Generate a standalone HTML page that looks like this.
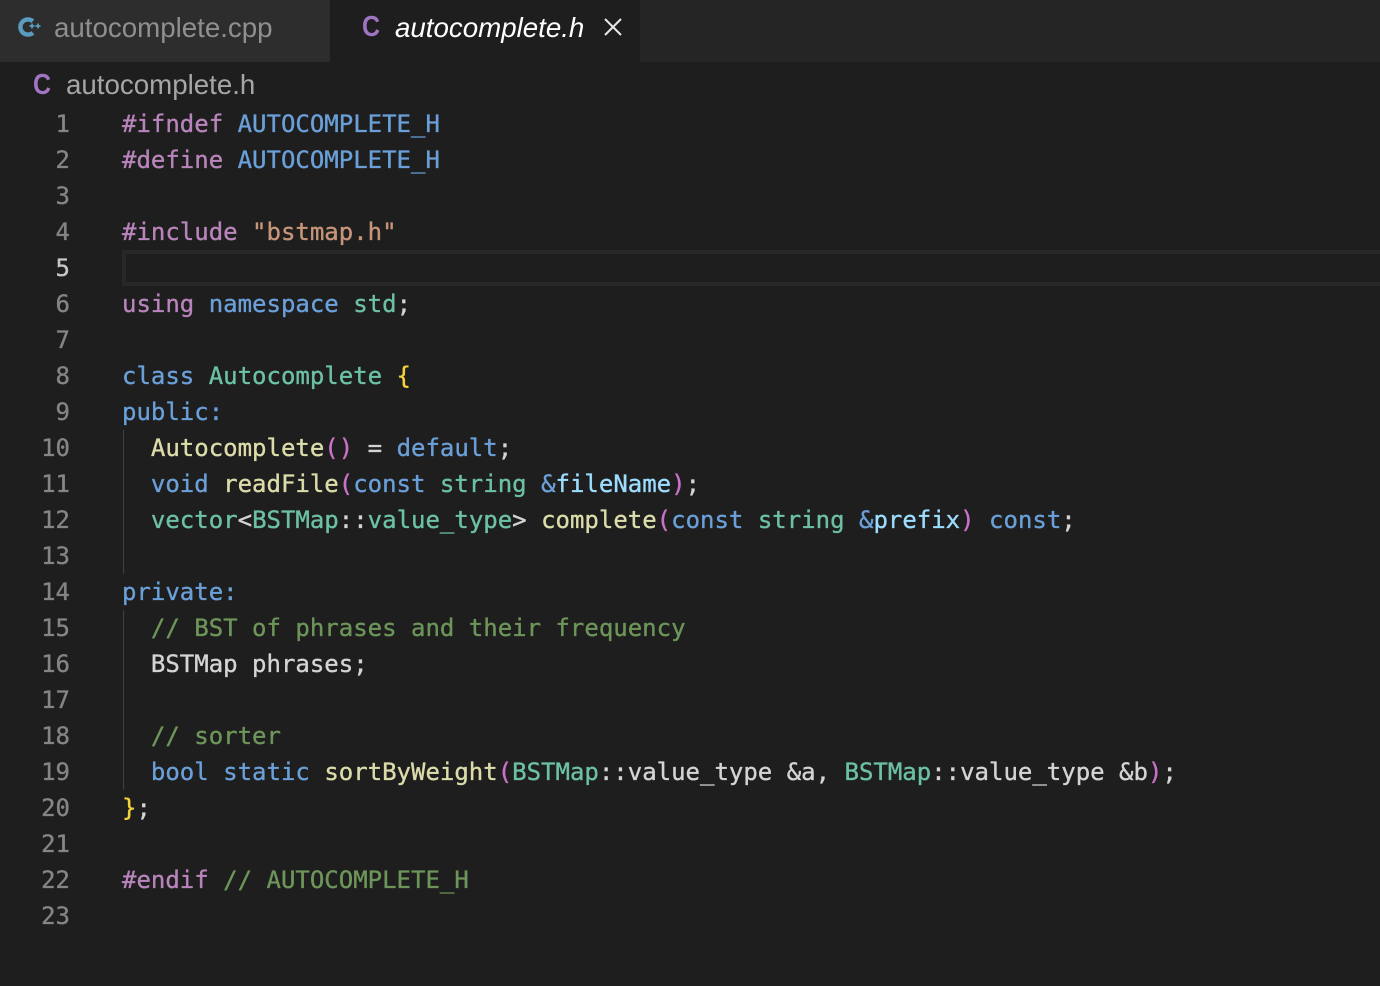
<!DOCTYPE html>
<html><head><meta charset="utf-8"><style>
html,body{margin:0;padding:0;width:1380px;height:986px;overflow:hidden;background:#1e1e1e}
.a{position:absolute}
.tabbar{left:0;top:0;width:1380px;height:62px;background:#252526}
.t1{left:0;top:0;width:330px;height:62px;background:#2d2d2d}
.t2{left:330px;top:0;width:310px;height:62px;background:#1e1e1e}
.ui{font-family:"Liberation Sans",sans-serif;font-size:27.7px;line-height:36px;white-space:pre}
.ic{font-family:"Liberation Sans",sans-serif;font-weight:700;font-size:29px;line-height:36px;color:#a074c4;transform:scaleX(.86);transform-origin:left center}
.ln,.c{font-family:"DejaVu Sans Mono",monospace;font-size:24px;line-height:36px;white-space:pre;height:36px;-webkit-text-stroke:.35px currentColor}
.ln{left:0;width:70px;text-align:right;color:#858585}
.c{left:122px;color:#d4d4d4}
.k{color:#b884bb}.b{color:#6a9fd8}.s{color:#c69479}.g{color:#6cc0a6}.f{color:#dcdcaa}.v{color:#9cdcfe}.m{color:#6d9559}.y{color:#f5d33c}.p{color:#c873c8}.d{color:#6a9fd8}
.guide{width:1px;background:#404040;left:123px}
</style></head><body>
<div class="a tabbar"></div><div class="a t1"></div><div class="a t2"></div>
<svg class="a" style="left:18px;top:14px" width="28" height="26" viewBox="0 0 28 26"><path d="M14.9 7.2A7.6 7.6 0 1 0 14.9 18.8" fill="none" stroke="#5a9cc0" stroke-width="4.4"/><path d="M11.5 12h5M14 9.5v5M17.5 12h5M20 9.5v5" stroke="#5a9cc0" stroke-width="1.7" fill="none"/></svg>
<div class="a ui" style="left:54px;top:10px;color:#8f8f8f">autocomplete.cpp</div>
<div class="a ic" style="left:362px;top:9px">C</div>
<div class="a ui" style="left:395px;top:10px;color:#fff;font-style:italic">autocomplete.h</div>
<svg class="a" style="left:602px;top:16px" width="22" height="22" viewBox="0 0 22 22"><path d="M3 3L19 19M19 3L3 19" stroke="#e8e8e8" stroke-width="2" fill="none"/></svg>
<div class="a ic" style="left:33px;top:67px">C</div>
<div class="a ui" style="left:66px;top:67px;color:#a6a6a6">autocomplete.h</div>
<div class="a" style="left:122px;top:250px;width:1258px;height:36px;box-sizing:border-box;border:4px solid #282828;border-right:0"></div>
<div class="a guide" style="top:430px;height:144px"></div>
<div class="a guide" style="top:610px;height:180px"></div>
<div class="a ln" style="top:106px">1</div>
<div class="a ln" style="top:142px">2</div>
<div class="a ln" style="top:178px">3</div>
<div class="a ln" style="top:214px">4</div>
<div class="a ln" style="top:250px;color:#c6c6c6">5</div>
<div class="a ln" style="top:286px">6</div>
<div class="a ln" style="top:322px">7</div>
<div class="a ln" style="top:358px">8</div>
<div class="a ln" style="top:394px">9</div>
<div class="a ln" style="top:430px">10</div>
<div class="a ln" style="top:466px">11</div>
<div class="a ln" style="top:502px">12</div>
<div class="a ln" style="top:538px">13</div>
<div class="a ln" style="top:574px">14</div>
<div class="a ln" style="top:610px">15</div>
<div class="a ln" style="top:646px">16</div>
<div class="a ln" style="top:682px">17</div>
<div class="a ln" style="top:718px">18</div>
<div class="a ln" style="top:754px">19</div>
<div class="a ln" style="top:790px">20</div>
<div class="a ln" style="top:826px">21</div>
<div class="a ln" style="top:862px">22</div>
<div class="a ln" style="top:898px">23</div>
<div class="a c" style="top:106px"><span class="k">#ifndef</span> <span class="d">AUTOCOMPLETE_H</span></div>
<div class="a c" style="top:142px"><span class="k">#define</span> <span class="d">AUTOCOMPLETE_H</span></div>
<div class="a c" style="top:214px"><span class="k">#include</span> <span class="s">"bstmap.h"</span></div>
<div class="a c" style="top:286px"><span class="k">using</span> <span class="d">namespace</span> <span class="g">std</span>;</div>
<div class="a c" style="top:358px"><span class="d">class</span> <span class="g">Autocomplete</span> <span class="y">{</span></div>
<div class="a c" style="top:394px"><span class="d">public:</span></div>
<div class="a c" style="top:430px">  <span class="f">Autocomplete</span><span class="p">()</span> = <span class="d">default</span>;</div>
<div class="a c" style="top:466px">  <span class="d">void</span> <span class="f">readFile</span><span class="p">(</span><span class="d">const</span> <span class="g">string</span> <span class="d">&amp;</span><span class="v">fileName</span><span class="p">)</span>;</div>
<div class="a c" style="top:502px">  <span class="g">vector</span>&lt;<span class="g">BSTMap</span>::<span class="g">value_type</span>&gt; <span class="f">complete</span><span class="p">(</span><span class="d">const</span> <span class="g">string</span> <span class="d">&amp;</span><span class="v">prefix</span><span class="p">)</span> <span class="d">const</span>;</div>
<div class="a c" style="top:574px"><span class="d">private:</span></div>
<div class="a c" style="top:610px">  <span class="m">// BST of phrases and their frequency</span></div>
<div class="a c" style="top:646px">  BSTMap phrases;</div>
<div class="a c" style="top:718px">  <span class="m">// sorter</span></div>
<div class="a c" style="top:754px">  <span class="d">bool</span> <span class="d">static</span> <span class="f">sortByWeight</span><span class="p">(</span><span class="g">BSTMap</span>::value_type &amp;a, <span class="g">BSTMap</span>::value_type &amp;b<span class="p">)</span>;</div>
<div class="a c" style="top:790px"><span class="y">}</span>;</div>
<div class="a c" style="top:862px"><span class="k">#endif</span> <span class="m">// AUTOCOMPLETE_H</span></div>
</body></html>
